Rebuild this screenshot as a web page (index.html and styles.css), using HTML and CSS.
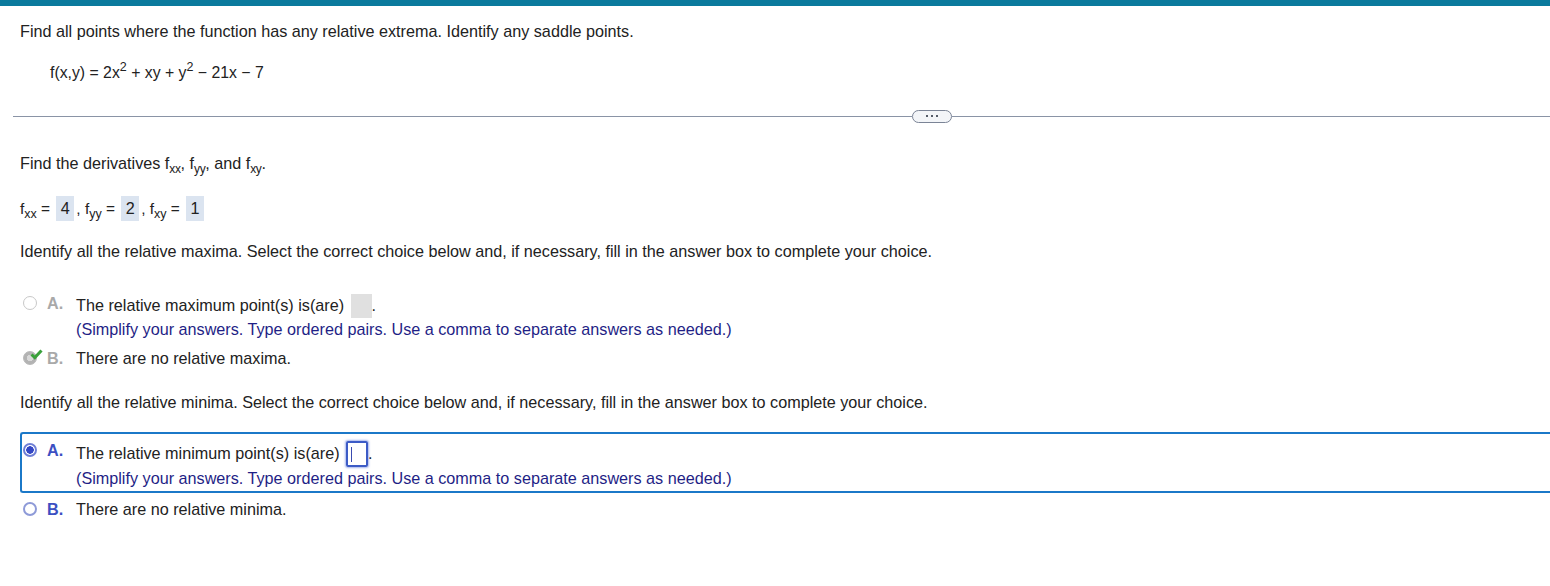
FILE: index.html
```html
<!DOCTYPE html>
<html>
<head>
<meta charset="utf-8">
<link rel="stylesheet" href="styles.css">
</head>
<body>
<div class="topbar"></div>
<div class="question">
  <p class="intro">Find all points where the function has any relative extrema. Identify any saddle points.</p>
  <p class="formula">f(x,y) = 2x<sup>2</sup> + xy + y<sup>2</sup> − 21x − 7</p>
</div>
<div class="divider">
  <span class="line line-left"></span>
  <span class="pill"><i></i><i></i><i></i></span>
  <span class="line line-right"></span>
</div>
<div class="answer">
  <p class="step">Find the derivatives f<sub>xx</sub>, f<sub>yy</sub>, and f<sub>xy</sub>.</p>
  <p class="derivs">f<sub>xx</sub> = <span class="ans">4</span>, f<sub>yy</sub> = <span class="ans">2</span>, f<sub>xy</sub> = <span class="ans">1</span></p>
  <p class="step prompt">Identify all the relative maxima. Select the correct choice below and, if necessary, fill in the answer box to complete your choice.</p>

  <div class="choices">
    <div class="choice disabled">
      <span class="radio"></span>
      <span class="letter">A.</span>
      <div class="body">
        <div class="main">The relative maximum point(s) is(are) <span class="box-gray"></span>.</div>
        <div class="hint">(Simplify your answers. Type ordered pairs. Use a comma to separate answers as needed.)</div>
      </div>
    </div>
    <div class="choice disabled">
      <span class="radio checked-gray">
        <svg class="check" width="13" height="11" viewBox="0 0 13 11"><path d="M1.5 5.5 L4.8 8.6 L11.5 1.5" fill="none" stroke="#3aa13a" stroke-width="3" stroke-linejoin="miter"/></svg>
      </span>
      <span class="letter">B.</span>
      <div class="body"><div class="main">There are no relative maxima.</div></div>
    </div>
  </div>

  <p class="step prompt2">Identify all the relative minima. Select the correct choice below and, if necessary, fill in the answer box to complete your choice.</p>

  <div class="choices">
    <div class="choice active selected-box">
      <span class="radio on"></span>
      <span class="letter">A.</span>
      <div class="body">
        <div class="main">The relative minimum point(s) is(are) <span class="box-input"><span class="caret"></span></span>.</div>
        <div class="hint">(Simplify your answers. Type ordered pairs. Use a comma to separate answers as needed.)</div>
      </div>
    </div>
    <div class="choice active plain">
      <span class="radio"></span>
      <span class="letter">B.</span>
      <div class="body"><div class="main">There are no relative minima.</div></div>
    </div>
  </div>
</div>
</body>
</html>
```

FILE: styles.css
```css
html, body {
  margin: 0;
  padding: 0;
  background: #ffffff;
  overflow: hidden;
}
body {
  font-family: "Liberation Sans", Arial, sans-serif;
  font-size: 16.2px;
  color: #222222;
}
p { margin: 0; }

.topbar {
  height: 6px;
  background: #0b7a9d;
}

.question {
  padding: 0 20px;
}
.intro {
  margin-top: 16px;
  line-height: 18px;
}
.formula {
  margin-top: 23px;
  padding-left: 30px;
  line-height: 20px;
  font-size: 15.8px;
  letter-spacing: 0;
}
sup {
  font-size: 12.5px;
  line-height: 0;
  vertical-align: 7px;
}
sub {
  font-size: 12.5px;
  line-height: 0;
  vertical-align: -4px;
}
.step sub {
  font-size: 12px;
  letter-spacing: -0.4px;
}

.divider {
  display: flex;
  align-items: center;
  margin-top: 26px;
  height: 14px;
}
.line {
  height: 1px;
  background: #8a94a6;
}
.line-left {
  margin-left: 13px;
  width: 899px;
}
.line-right { flex: 1; }
.pill {
  width: 38px;
  height: 11px;
  border: 1px solid #7b8496;
  border-radius: 7px;
  background: #f3f5f8;
  display: flex;
  align-items: center;
  justify-content: center;
  gap: 3px;
}
.pill i {
  display: block;
  width: 2px;
  height: 2px;
  background: #555c68;
}

.answer {
  padding: 0 0 0 20px;
}
.step {
  line-height: 18px;
}
.answer > .step:first-child {
  margin-top: 31px;
}
.derivs {
  margin-top: 24px;
  line-height: 25px;
  height: 25px;
  font-size: 15.4px;
}
.ans {
  display: inline-block;
  min-width: 16px;
  padding: 0 1px;
  height: 25px;
  line-height: 25px;
  background: #dbe4f0;
  text-align: center;
  margin: 0 2px;
  vertical-align: top;
  font-size: 16.2px;
}
.prompt {
  margin-top: 21px;
}
.prompt2 {
  margin-top: 25px;
}

.choice {
  display: flex;
  align-items: flex-start;
}
.choice .radio {
  position: relative;
  flex: none;
  width: 14px;
  height: 14px;
  border-radius: 50%;
  box-sizing: border-box;
  border: 1px solid #c8c8c8;
  background: #fff;
  margin-left: 3px;
  margin-top: 2px;
}
.choice .letter {
  flex: none;
  width: 29px;
  margin-left: 10px;
  font-weight: bold;
  color: #a9a9a9;
}
.choice .body {
  flex: 1;
}
.main {
  line-height: 18px;
}
.hint {
  margin-top: 2px;
  line-height: 18px;
  color: #1f1f86;
}

.disabled:first-child {
  margin-top: 34px;
}
.disabled + .disabled {
  margin-top: 11px;
}

.box-gray {
  display: inline-block;
  width: 21px;
  height: 24px;
  background: #e0e0e0;
  vertical-align: -7px;
  margin-left: 2px;
}

.radio.checked-gray {
  border: 1px solid #b8b8b8;
  background: radial-gradient(circle, #d8d8d8 0 3px, #b3b3b3 3.5px);
}
.check {
  position: absolute;
  left: 6px;
  top: -3px;
}

.active .letter {
  color: #3c4fc2;
}
.active .radio {
  border: 2px solid #8e9ad8;
}
.active .radio.on {
  border: 2px solid #6f7fd6;
  background: radial-gradient(circle, #3346c4 0 3.5px, #fff 4px);
}

.selected-box {
  margin-top: 21px;
  border: 2px solid #1b78c8;
  border-right: none;
  border-radius: 3px 0 0 3px;
  padding: 7px 0 4px 0;
}
.selected-box .radio { margin-left: 1px; }
.selected-box .hint { margin-top: 2px; }
.plain {
  margin-top: 7px;
}

.box-input {
  position: relative;
  display: inline-block;
  box-sizing: border-box;
  width: 22px;
  height: 26px;
  border: 2px solid #3c5bc6;
  box-shadow: 0 0 2px 1px rgba(80, 110, 220, 0.5);
  border-radius: 2px;
  vertical-align: -8px;
  margin-left: 2px;
}
.caret {
  position: absolute;
  left: 3px;
  top: 4px;
  width: 1px;
  height: 15px;
  background: #3a4bb0;
}
```
